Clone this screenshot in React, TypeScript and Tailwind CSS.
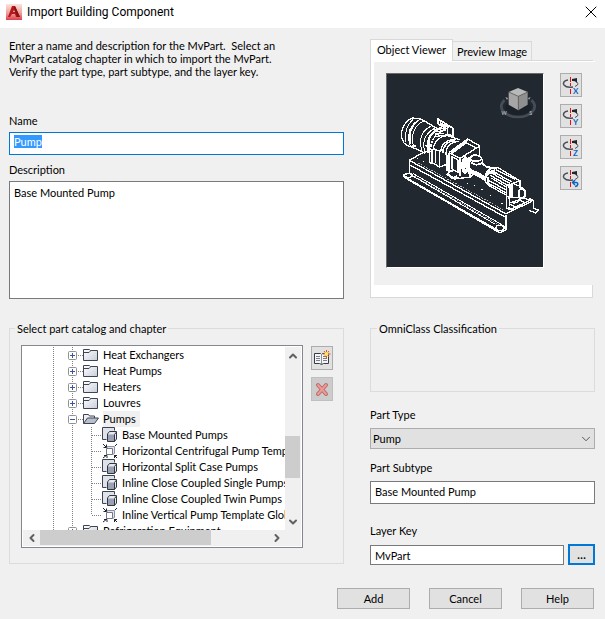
import { ChevronDown, ChevronLeft, ChevronRight, ChevronUp, X } from "lucide-react";
import React, { useEffect, useRef, useState } from "react";

const folders = ["Heat Exchangers", "Heat Pumps", "Heaters", "Louvres"];

const pumps = [
  { name: "Base Mounted Pumps", template: false },
  { name: "Horizontal Centrifugal Pump Template", template: true },
  { name: "Horizontal Split Case Pumps", template: false },
  { name: "Inline Close Coupled Single Pumps", template: false },
  { name: "Inline Close Coupled Twin Pumps", template: false },
  { name: "Inline Vertical Pump Template Global", template: true },
];

const axes = ["X", "Y", "Z", ""];

function AppLogo() {
  return (
    <svg width="16" height="16" viewBox="0 0 16 16" aria-hidden="true">
      <defs>
        <linearGradient id="logo" x1="0" y1="0" x2="0" y2="1">
          <stop offset="0" stopColor="#fbe4dc" />
          <stop offset="0.6" stopColor="#ee9a96" />
          <stop offset="1" stopColor="#dc3f4a" />
        </linearGradient>
      </defs>
      <rect width="16" height="16" fill="url(#logo)" />
      <path d="M6 2h3l5 11h-4l-1-3H6l-2 3H2z" fill="#b3191e" />
      <path d="M8 6l1 2H7z" fill="#f3b9b2" />
      <path d="M9 2l5 11h-3L8 4z" fill="#8d1216" />
    </svg>
  );
}

function Folder() {
  return (
    <svg width="16" height="16" viewBox="0 0 16 16" className="shrink-0" aria-hidden="true">
      <defs>
        <linearGradient id="folder" x1="0" y1="0" x2="1" y2="1">
          <stop offset="0" stopColor="#fff" />
          <stop offset="1" stopColor="#c9cdd8" />
        </linearGradient>
      </defs>
      <path d="M.5 13.500v-11h6l1 1h7v10z" fill="url(#folder)" stroke="#3c4454" />
      <path d="M1 5.500h5l2-2" fill="none" stroke="#3c4454" />
    </svg>
  );
}

function OpenFolder() {
  return (
    <svg width="16" height="16" viewBox="0 0 16 16" className="shrink-0" aria-hidden="true">
      <path d="M.5 12.500v-9h5l1 1.500h5v2" fill="#eceef2" stroke="#3c4454" />
      <path d="M.5 12.500l4-5.500h11l-4 5.500z" fill="#b9bfcb" stroke="#3c4454" />
    </svg>
  );
}

function PartIcon() {
  return (
    <svg width="16" height="16" viewBox="0 0 16 16" className="shrink-0" aria-hidden="true">
      <path d="M1 1h11v4H6v7H1z" fill="#dfe2e8" />
      <path d="M.5 12.500V.5h12v3M.5 12.500h4" fill="none" stroke="#3c4454" />
      <path d="M5.500 7l2-2.500h7v7.500l-2 2.500h-7z" fill="#e6e8ee" stroke="#2f3747" />
      <path d="M6 7.500h6v6.500H6z" fill="#9aa1b1" />
      <path d="M12.500 7.500v7M12.500 7.500l2-2.500" fill="none" stroke="#2f3747" />
    </svg>
  );
}

function TemplateIcon() {
  return (
    <svg width="16" height="16" viewBox="0 0 16 16" className="shrink-0" aria-hidden="true">
      <path d="M4.500 5.500l1-2h7v7l-2 1h-6z" fill="#e4e6ec" stroke="#8a91a0" />
      <path d="M4.500 5.500h6v6h-6z" fill="#fff" stroke="#70788a" />
      <path d="M1 1l3 3M15 1l-2 2M1 15l4-3M15 15l-3-3" stroke="#1f2430" fill="none" />
      <path d="M1.500 4.500h3v-3M12.500 12v3M12 12.500h3M2 12.500h3v2.500" stroke="#1f2430" fill="none" />
    </svg>
  );
}

function Toggle({ open = false, label }: { open?: boolean; label: string }) {
  return (
    <button type="button" aria-label={label} className="h-4 w-[9px] shrink-0">
      <svg width="9" height="16" viewBox="0 0 9 16" aria-hidden="true">
        <path d="M4.500 0v16" stroke="#808080" strokeDasharray="1 1" />
        <rect x=".5" y="4.500" width="8" height="8" rx="1" fill="#fff" stroke="#919191" />
        <path d="M2 8.500h5" stroke="#3a57a5" />
        {!open && <path d="M4.500 6v5" stroke="#3a57a5" />}
      </svg>
    </button>
  );
}

function FolderRow({ name, open = false }: { name: string; open?: boolean }) {
  return (
    <li role="treeitem" aria-expanded={open} className="flex h-4 items-center">
      <svg width="45" height="16" viewBox="0 0 45 16" className="shrink-0" aria-hidden="true">
        <path d="M30.500 0v16" stroke="#808080" strokeDasharray="1 1" />
      </svg>
      <Toggle open={open} label={name} />
      <svg width="6" height="16" viewBox="0 0 6 16" className="shrink-0" aria-hidden="true">
        <path d="M1 8.500h5" stroke="#808080" strokeDasharray="1 1" />
      </svg>
      {open ? <OpenFolder /> : <Folder />}
      <span className={open ? "ml-1 bg-[#f0f0f0] pr-1 leading-4" : "ml-1 leading-4"}>{name}</span>
    </li>
  );
}

function PumpRow({ name, template, last }: { name: string; template: boolean; last: boolean }) {
  return (
    <li role="treeitem" className="flex h-4 items-center">
      <svg width="79" height="16" viewBox="0 0 79 16" className="shrink-0" aria-hidden="true">
        <path d="M30.500 0v16M49.500 0v16" stroke="#808080" strokeDasharray="1 1" />
        <path d={last ? "M68.500 0v8" : "M68.500 0v16"} stroke="#808080" strokeDasharray="1 1" />
        <path d="M69 8.500h9" stroke="#808080" strokeDasharray="1 1" />
      </svg>
      {template ? <TemplateIcon /> : <PartIcon />}
      <span className="ml-1 leading-4">{name}</span>
    </li>
  );
}

function RotateIcon({ axis }: { axis: string }) {
  return (
    <svg width="20" height="22" viewBox="0 0 20 22" aria-hidden="true">
      <path d="M7 6C3 6.500 1.500 9 3 11C5 13.500 9 13.500 12 13" fill="none" stroke="#4a4f59" strokeWidth="1.500" />
      <path d="M12 6.500C16 7 17.500 9 16.500 11L14 12.500" fill="none" stroke="#4a4f59" />
      <path d="M11 5l5-1v5l-2-2-3 0z" fill="#22262e" />
      <path d="M9.500 3v5M9.500 9v3M9.500 15v5" stroke="#e01010" />
      {axis ? (
        <text x="12" y="20" fontSize="8" fontWeight="700" fill="#0b66c3">
          {axis}
        </text>
      ) : (
        <path d="M12 15.500h3c3 0 2 4-1 4M14 13l-2.500 2.500 2.500 2.500" fill="none" stroke="#0b66c3" strokeWidth="1.500" />
      )}
    </svg>
  );
}

function PumpDrawing() {
  return (
    <svg viewBox="81 43 468 579" width="156" height="193" className="block bg-[#212830]" role="img" aria-label="Base mounted pump">
      {/* view cube */}
      <path d="M434 121C408 146 438 172 474 172C510 172 540 146 514 121" fill="none" stroke="#464c56" strokeWidth="8" />
      <ellipse cx="474" cy="143" rx="38" ry="23" fill="#1b2129" />
      <path d="M436 112l8 3-3 6zM512 112l-8 3 3 6z" fill="#a0a3a7" />
      <path d="M446 97l28-12 29 12-28 13z" fill="#b9b9b9" />
      <path d="M446 97l29 13v42l-29-17z" fill="#a6a6a6" />
      <path d="M503 97l-28 13v42l28-17z" fill="#8f8f8f" />
      <path d="M446 97l29 13 28-13M475 110v42" fill="none" stroke="#5b5b5b" strokeWidth="2" />
      <text x="424" y="166" fontSize="16" fontWeight="700" fill="#a9abae">W</text>
      <text x="508" y="166" fontSize="16" fontWeight="700" fill="#a9abae">S</text>

      <g fill="none" stroke="#fff" strokeWidth="4" shapeRendering="crispEdges">
        {/* base frame */}
        <path d="M205 274L186 280L148 302V341M148 302L437 462L516 425M150 316L437 473M148 341L131 345V351L420 520L438 511V466M520 425V446L535 451L526 460L508 452" />
        <path d="M136 354L417 515" strokeWidth="6" />
        <path d="M158 341L434 500M150 344L406 494" strokeWidth="3" />
        <path d="M165 350L418 496M175 310L430 450" strokeDasharray="5 4" strokeWidth="2" />
        <ellipse cx="420" cy="505" rx="12" ry="8" />
        <ellipse cx="145" cy="347" rx="12" ry="6" />
        <path d="M508 415L521 423V445" strokeWidth="4" />
        <path d="M170 296h4M188 306h4M320 372h4M341 377h4M364 390h4M390 408h4M424 432h4" strokeWidth="3" />
        {/* electric motor */}
        <path d="M183 178L159 175L143 183L131 198L125 215V235L132 250L146 260L168 259M183 178L222 201L243 211M149 259L196 281" />
        <path d="M183 178C155 188 137 221 151 259M191 184C166 196 151 222 161 264M158 180C139 198 134 222 137 247" strokeWidth="3" />
        <path d="M172 184C151 203 145 226 151 252" strokeWidth="5" />
        <path d="M215 198C182 215 177 235 185 275M225 205C193 223 187 245 194 278" strokeWidth="3" />
        <path d="M234 210C205 225 199 245 204 281" strokeWidth="6" />
        <path d="M243 215C219 231 210 250 212 276" strokeDasharray="7 3" strokeWidth="5" />
        <path d="M149 208V247M208 238V281M196 257L216 271" strokeWidth="5" />
        <path d="M234 192V178L279 206V230L262 223V208L232 191M240 190L267 204M223 211L242 204L258 211" strokeWidth="5" />
        <path d="M228 216L254 213M226 223L252 222M223 231L260 226" strokeWidth="4" />
        {/* coupling guard */}
        <path d="M216 270V309L239 322L258 315M219 270C222 246 240 228 264 228L299 240M239 276V321M218 266L242 276C244 252 261 240 288 239M258 286C258 263 271 247 297 245M227 269V311" />
        <path d="M248 281C249 259 263 244 285 243" strokeWidth="5" />
        <path d="M208 277V306L216 312M261 287V333" strokeWidth="5" />
        {/* bearing housing */}
        <path d="M266 279L323 238L358 258V290M266 279L300 296V350M300 296L356 261M266 279V345M274 283L319 249L347 264M276 291L294 301V338L276 328ZM267 344L284 358L330 352L344 341M272 333L259 345L273 352L300 356" />
        <path d="M266 281V334M298 296V334M274 278L323 242" strokeWidth="5" />
        <path d="M262 345L278 356L291 349M268 337L282 332" strokeWidth="5" />
        {/* shaft and volute */}
        <path d="M320 292C306 306 305 329 319 341" strokeWidth="12" />
        <path d="M331 296C320 307 318 324 330 334L349 342L378 358" strokeWidth="13" />
        <path d="M331 294C337 282 362 286 365 297C365 305 336 307 331 300M334 309C344 318 361 317 369 305M367 298V311L379 322H391" strokeWidth="5" />
        <path d="M326 335L331 351L345 341M349 342L384 355V373L397 378" strokeWidth="5" />
        {/* drive end */}
        <path d="M378 350L374 362L384 376L440 407M391 347L443 377M394 355L439 382M388 363L440 392M386 371L439 400M399 336L455 366M407 329L466 359M413 323L480 364M397 341L449 371" />
        <path d="M377 347C382 330 395 319 412 326M377 350C389 336 400 336 412 342M384 338L405 332" strokeWidth="6" />
        <path d="M440 375V446L450 450M440 378L480 363V384M449 378V438M455 373V411M447 414H477M463 372L476 379" strokeWidth="4" />
        <path d="M444 382L454 379V410L443 414" strokeWidth="7" />
        <ellipse cx="486" cy="401" rx="10" ry="15" strokeWidth="6" />
        <path d="M484 388L496 394V408L482 418L472 412" />
        <path d="M451 449L516 420M451 430L478 420L494 429L468 443L451 434M460 432L477 425M443 443L462 451M492 414L516 425" strokeWidth="4" />
      </g>
    </svg>
  );
}

function PushButton({ children }: { children: React.ReactNode }) {
  return (
    <button type="button" className="h-[21px] w-[73px] border border-[#adadad] bg-[#e1e1e1] text-center">
      {children}
    </button>
  );
}

export default function ImportBuildingComponent() {
  const [name, setName] = useState("Pump");
  const [description, setDescription] = useState("Base Mounted Pump");
  const [subtype, setSubtype] = useState("Base Mounted Pump");
  const [layerKey, setLayerKey] = useState("MvPart");
  const nameRef = useRef<HTMLInputElement>(null);

  // The dialog opens with the whole name selected
  useEffect(() => {
    nameRef.current?.focus();
    nameRef.current?.select();
  }, []);

  return (
    <div className="flex min-h-screen flex-col bg-[#f0f0f0] font-[Lato,sans-serif] text-[11px] leading-[13px] text-black">
      <header className="flex h-7 items-center bg-white pr-1 pl-1.5 pb-1">
        <AppLogo />
        <h1 className="ml-[5px] flex-1 font-[Roboto,sans-serif] text-[12px] leading-4">Import Building Component</h1>
        <button type="button" aria-label="Close">
          <X size={20} strokeWidth={1.2} />
        </button>
      </header>

      <form onSubmit={(e) => e.preventDefault()} className="pt-[11px] pr-[10px] pl-[9px]">
        <div className="grid grid-cols-[67fr_45fr] gap-x-[26px]">
          <div className="flex min-w-0 flex-col">
            <p className="whitespace-pre">
              {"Enter a name and description for the MvPart.  Select an\nMvPart catalog chapter in which to import the MvPart.\nVerify the part type, part subtype, and the layer key."}
            </p>

            <label htmlFor="name" className="mt-9">Name</label>
            <input
              id="name"
              ref={nameRef}
              value={name}
              onChange={(e) => setName(e.target.value)}
              className="mt-[5px] h-[23px] w-full border border-[#0078d7] bg-white px-1 pb-1 outline-none selection:bg-[#3399ff] selection:text-white"
            />

            <label htmlFor="description" className="mt-2">Description</label>
            <textarea
              id="description"
              value={description}
              onChange={(e) => setDescription(e.target.value)}
              className="mt-[5px] block h-[118px] w-full resize-none border border-[#7a7a7a] bg-white px-1 py-1 outline-none"
            />
          </div>

          <div className="min-w-0">
            <div role="tablist" className="flex items-end">
              <button type="button" role="tab" aria-selected="true" className="h-[22px] w-[83px] border border-b-0 border-[#d9d9d9] bg-white pb-0.5">
                Object Viewer
              </button>
              <button type="button" role="tab" aria-selected="false" className="h-5 w-[79px] border border-l-0 border-[#d9d9d9]">
                Preview Image
              </button>
              <div className="mr-0.5 flex-1 border-b border-[#d9d9d9]" />
            </div>
            <div role="tabpanel" className="border-l border-[#d9d9d9] bg-white pt-px pl-[3px]">
              <div className="flex h-[223px] justify-between bg-[#f0f0f0] pt-[11px] pr-[13px] pl-3">
                <div className="h-[195px] border border-t-[#696969] border-r-white border-b-white border-l-[#696969]">
                  <PumpDrawing />
                </div>
                <div className="flex flex-col gap-[7px]">
                  {axes.map((axis) => (
                    <button
                      key={axis}
                      type="button"
                      aria-label={axis ? `Rotate around ${axis}` : "Reset rotation"}
                      className="h-6 w-[22px] border border-[#adadad] bg-[#e1e1e1]"
                    >
                      <RotateIcon axis={axis} />
                    </button>
                  ))}
                </div>
              </div>
            </div>
            <div className="mr-0.5 h-[13px] border border-t-0 border-[#d9d9d9] bg-white" />
          </div>
        </div>

        <div className="mt-[23px] grid grid-cols-[67fr_45fr] gap-x-[26px]">
          <fieldset className="h-[242px] min-w-0 border border-[#dcdcdc] pr-[10px] pl-[11px]">
            <legend className="-ml-1.5 px-0.5">Select part catalog and chapter</legend>
            <div className="mt-[10px] flex gap-2">
              <div className="h-[203px] min-w-0 flex-1 border border-[#828790] bg-white p-px">
                <div className="flex h-[183px]">
                  <ul role="tree" aria-label="Part catalog" className="min-w-0 flex-1 overflow-hidden whitespace-nowrap">
                    {folders.map((folder) => (
                      <FolderRow key={folder} name={folder} />
                    ))}
                    <FolderRow name="Pumps" open />
                    {pumps.map((pump, i) => (
                      <PumpRow key={pump.name} name={pump.name} template={pump.template} last={i === pumps.length - 1} />
                    ))}
                    <FolderRow name="Refrigeration Equipment" />
                  </ul>
                  <div className="flex w-4 flex-col bg-[#f0f0f0]">
                    <button type="button" aria-label="Scroll up" className="flex h-[17px] items-center justify-center">
                      <ChevronUp size={12} strokeWidth={4} color="#606060" />
                    </button>
                    <div className="mt-[72px] mr-px h-[42px] bg-[#cdcdcd]" />
                    <button type="button" aria-label="Scroll down" className="mt-auto flex h-[17px] items-center justify-center">
                      <ChevronDown size={12} strokeWidth={4} color="#606060" />
                    </button>
                  </div>
                </div>
                <div className="flex h-4 bg-[#f0f0f0]">
                  <button type="button" aria-label="Scroll left" className="flex w-[17px] items-center justify-center">
                    <ChevronLeft size={12} strokeWidth={4} color="#606060" />
                  </button>
                  <div className="mb-px w-[171px] bg-[#cdcdcd]" />
                  <button type="button" aria-label="Scroll right" className="mr-4 ml-auto flex w-[17px] items-center justify-center">
                    <ChevronRight size={12} strokeWidth={4} color="#606060" />
                  </button>
                </div>
              </div>
              <div className="flex flex-col gap-[7px] pt-px">
                <button type="button" aria-label="New chapter" className="h-6 w-[22px] border border-[#adadad] bg-[#e1e1e1]">
                  <svg width="20" height="22" viewBox="0 0 20 22" aria-hidden="true">
                    <path d="M2.500 6.500h6l1 1 1-1h6v10h-5l-2 1-2-1h-5z" fill="#f4f4f4" stroke="#333b49" />
                    <path d="M9.500 7v10" stroke="#8b8f98" />
                    <path d="M4 9.500h4M4 11.500h4M4 13.500h4M11 9.500h3M11 11.500h4M11 13.500h4" stroke="#7a7f89" />
                    <path d="M14.500 3v8M10.500 7h8M12 4l5 6M17 4l-5 6" stroke="#d9541e" />
                    <circle cx="14.500" cy="7" r="2" fill="#ffe65c" />
                  </svg>
                </button>
                <button type="button" disabled aria-label="Delete chapter" className="h-6 w-[22px] border border-[#bfbfbf] bg-[#cccccc]">
                  <svg width="20" height="22" viewBox="0 0 20 22" aria-hidden="true">
                    <path d="M6 7l8 9M14 7l-8 9" stroke="#b96a68" strokeWidth="4" strokeLinecap="round" />
                    <path d="M6 7l8 9M14 7l-8 9" stroke="#ee9a96" strokeWidth="2" strokeLinecap="round" />
                  </svg>
                </button>
              </div>
            </div>
          </fieldset>

          <div className="flex min-w-0 flex-col">
            <fieldset className="h-[70px] border border-[#dcdcdc] pl-1.5">
              <legend className="px-0.5">OmniClass Classification</legend>
            </fieldset>

            <label htmlFor="partType" className="mt-4">Part Type</label>
            <div className="relative mt-[7px]">
              <select id="partType" className="block h-[21px] w-full appearance-none border border-[#adadad] bg-[#e1e1e1] pl-0.5">
                <option>Pump</option>
              </select>
              <ChevronDown size={14} strokeWidth={1.5} color="#444" className="pointer-events-none absolute top-1 right-0.5" />
            </div>

            <label htmlFor="subtype" className="mt-3">Part Subtype</label>
            <input
              id="subtype"
              value={subtype}
              onChange={(e) => setSubtype(e.target.value)}
              className="mt-[7px] h-[23px] w-full border border-[#7a7a7a] bg-white px-1 pb-0.5 outline-none"
            />

            <label htmlFor="layerKey" className="mt-5">Layer Key</label>
            <div className="mt-[7px] flex items-end gap-1">
              <input
                id="layerKey"
                value={layerKey}
                onChange={(e) => setLayerKey(e.target.value)}
                className="h-5 min-w-0 flex-1 border border-[#7a7a7a] bg-white px-1 outline-none"
              />
              <button type="button" aria-label="Browse layer keys" className="h-[21px] w-[27px] border-2 border-[#0078d7] bg-[#e1e1e1] text-[13px]">
                ...
              </button>
            </div>
          </div>
        </div>

        <div className="mt-[23px] flex justify-end gap-[19px] pr-px pb-[9px]">
          <PushButton>Add</PushButton>
          <PushButton>Cancel</PushButton>
          <PushButton>Help</PushButton>
        </div>
      </form>
    </div>
  );
}
